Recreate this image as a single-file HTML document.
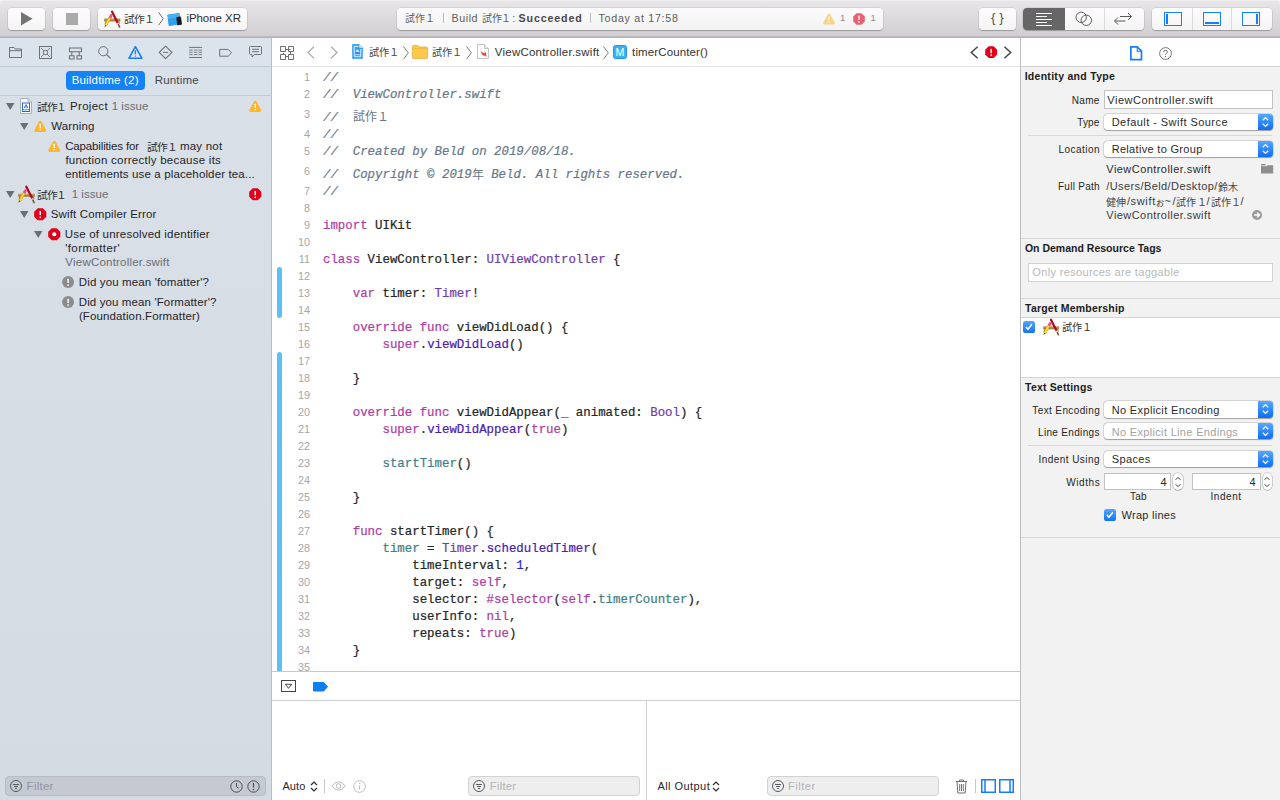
<!DOCTYPE html>
<html><head><meta charset="utf-8"><title>Xcode</title>
<style>
*{box-sizing:border-box;margin:0;padding:0}
html,body{width:1280px;height:800px;overflow:hidden;background:#fff;font-family:"Liberation Sans",sans-serif;font-size:12px;color:#262626}
.a{position:absolute}
svg{display:block;overflow:visible}
svg.cj{display:inline-block;vertical-align:-0.12em}
svg text.cjt{font-family:"Liberation Sans","Noto Sans CJK JP",sans-serif;font-size:1000px;font-style:normal;font-weight:400;stroke:none}
.t{position:absolute;white-space:nowrap;line-height:14px}
/* toolbar */
#tb{left:0;top:0;width:1280px;height:37px;background:linear-gradient(#e8e6e8,#d1cfd1);border-bottom:1px solid #bdbbbd;box-shadow:inset 0 1px 0 #f0eff0}
.btn{position:absolute;top:8px;height:22px;border-radius:4px;background:linear-gradient(#fdfdfd,#f4f4f4);box-shadow:0 0 0 .5px rgba(0,0,0,.12),0 1px 1px rgba(0,0,0,.22)}
/* navigator */
#nav{left:0;top:37px;width:272px;height:763px;background:linear-gradient(#d9e0e8,#d5dbe3);border-right:1px solid #b9bec6}
#navtabs{left:0;top:0;width:271px;height:30px;background:#dbe3ec;border-bottom:1px solid #c3cad2}
#navscope{left:0;top:30px;width:271px;height:29px;border-bottom:1px solid #c3cad2;background:#d9e1ea}
/* editor */
#ed{left:272px;top:37px;width:748px;height:763px;background:#fff}
#jump{left:0;top:0;width:748px;height:30px;border-bottom:1px solid #e3e3e3;background:#fff}
.code{position:absolute;left:51px;white-space:pre;font-family:"Liberation Mono",monospace;font-size:12.400px;line-height:17px;color:#262626;-webkit-text-stroke:.22px}
.ln{position:absolute;left:0;width:37.900px;text-align:right;font-family:"Liberation Sans",sans-serif;font-size:10.800px;line-height:17px;color:#a5a5aa}
.k{color:#ad3da4}.ty{color:#703daa}.fn{color:#4b21b0}.pr{color:#3e8087}.c{color:#68778a;font-style:italic}.nu{color:#272ad8}
/* inspector */
#insp{left:1020px;top:37px;width:260px;height:763px;background:#f2f2f2}

.hd{font-weight:700;font-size:10.500px;color:#1e1e1e}
.lb{left:0;width:79px;text-align:right;font-size:10.300px;color:#262626}
.fld{position:absolute;background:#fff;border:1px solid #c2c2c2}
.pop{position:absolute;left:84.300px;width:168.600px;border-radius:3.500px;background:#fff;box-shadow:0 0 0 .5px rgba(0,0,0,.18),0 .6px 1px rgba(0,0,0,.28)}
.stp{position:absolute;right:0;top:0;width:15px;height:100%;border-radius:0 3.500px 3.500px 0;background:linear-gradient(#54a8fd,#0f6df5)}
.stp2{position:absolute;width:9.700px;border-radius:4.850px;background:#fff;box-shadow:0 0 0 .5px rgba(0,0,0,.28),0 .6px 1px rgba(0,0,0,.18)}
.sep{position:absolute;left:8px;width:244px;height:1px;background:#d8d8d8}
.cb{position:absolute;width:11.700px;height:11.700px;border-radius:2.600px;background:linear-gradient(#53a7fd,#1272f6)}
</style></head><body>
<svg width="0" height="0" style="position:absolute;left:-10px;top:-10px"><defs>
<g id="warn"><path d="M6 0.6 Q6.7 0.6 7.1 1.3 L11.6 9.6 Q12.2 11.2 10.6 11.4 H1.4 Q-0.2 11.2 0.4 9.6 L4.9 1.3 Q5.3 0.6 6 0.6Z" fill="#fdb52c"/><rect x="5.35" y="3.6" width="1.3" height="4" rx=".4" fill="#fff"/><circle cx="6" cy="9.2" r=".8" fill="#fff"/></g>
<g id="err"><path d="M3.6 0.2H8.4L11.8 3.6V8.4L8.4 11.8H3.6L0.2 8.4V3.6Z" fill="#e0001a"/><rect x="5.3" y="2.6" width="1.4" height="4.4" rx=".5" fill="#fff"/><circle cx="6" cy="8.9" r=".85" fill="#fff"/></g>
<g id="errdot"><path d="M3.6 0.2H8.4L11.8 3.6V8.4L8.4 11.8H3.6L0.2 8.4V3.6Z" fill="#e0001a"/><circle cx="6" cy="6" r="2" fill="#fff"/></g>
<g id="note"><circle cx="6" cy="6" r="5.9" fill="#8c8c8c"/><rect x="5.3" y="2.6" width="1.4" height="4.4" rx=".5" fill="#fff"/><circle cx="6" cy="8.9" r=".85" fill="#fff"/></g>
<g id="xcicon"><rect x=".2" y="7.900" width="16.600" height="2.900" fill="#b07f47"/><rect x=".2" y="7.900" width="16.600" height=".8" fill="#d1a566"/><path d="M1.800 10.800L1.100 13.200M15.200 10.800L15.900 13.200" stroke="#8c6538" stroke-width="1"/><path d="M8.300 .8L14.300 12.600" stroke="#a50f1f" stroke-width="2.300" stroke-linecap="round"/><path d="M14.100 12.200L15 14.200" stroke="#dcdcdc" stroke-width="2.100"/><path d="M15 14.200L16 16.500" stroke="#7a4a2a" stroke-width="1.600" stroke-linecap="round"/><path d="M1.700 14.800L6.700 5.900" stroke="#c9a11b" stroke-width="3"/><path d="M1.900 14.600L6.800 5.800" stroke="#f7dc3a" stroke-width="1.900"/><path d="M6.700 6L7.400 4.700" stroke="#ee4d8d" stroke-width="2.900" stroke-linecap="round"/><path d="M.5 16.700L1 14.300L2.600 15.200Z" fill="#6b4a2c"/></g>
<!--x--><g id="simicon"><path d="M.8 2.100L12.100 .5L13.300 10.800L2.100 12.600Z" fill="#2f9ff0" stroke="#2f9ff0" stroke-width="1" stroke-linejoin="round"/><path d="M.8 2.100L12.100 .5L12.500 4L1.200 6Z" fill="#5fc0f8" opacity=".55"/><path d="M9.800 4.500L13.600 3.900L14.500 11.300L10.600 11.900Z" fill="#1b1b1d" stroke="#1b1b1d" stroke-width=".9" stroke-linejoin="round"/></g>
<g id="projicon"><path d="M.5 .5H8L11.500 4V15.500H.5Z" fill="#fff" stroke="#9aa0a8" stroke-width=".8"/><path d="M8 .5V4H11.500" fill="none" stroke="#9aa0a8" stroke-width=".8"/><rect x="2.500" y="5" width="7" height="8.500" fill="none" stroke="#2a6fc9" stroke-width="1"/><path d="M4.200 10L6 6.500L7.800 10M4.800 9H7.200" fill="none" stroke="#2a6fc9" stroke-width=".9"/><path d="M2.500 11.800H9.500" stroke="#2a6fc9" stroke-width=".8"/></g>
<g id="filt"><circle cx="6" cy="6" r="5.500" fill="none" stroke="#55595f"/><path d="M3 4.500H9M4 6.500H8M5 8.500H7" stroke="#55595f"/></g>
<g id="projicon2"><path d="M.3 .3H7.300L10.700 3.700V14.700H.3Z" fill="#1c90f3"/><path d="M.3 .3H7.300L10.700 3.700V8H.3Z" fill="#35aaf5" opacity=".7"/><path d="M7.300 .3V3.700H10.700Z" fill="#d9ecfb"/><path d="M2.200 2.500H6.500M2.200 2.500V12.800H8.800V5" fill="none" stroke="#fff" stroke-width=".9"/><path d="M3.800 8.200L5.500 5.800L7.200 8.200M4.500 7.300H6.500" fill="none" stroke="#fff" stroke-width=".9"/><path d="M2.200 10.800H8.800" stroke="#fff" stroke-width=".8"/></g>
<g id="swifticon"><path d="M.5 .5H7.500L11.500 4.500V14.500H.5Z" fill="#fff" stroke="#b5b5b5" stroke-width=".8"/><path d="M7.500 .5V4.500H11.500" fill="#eee" stroke="#b5b5b5" stroke-width=".8"/><path d="M3 8.500Q5 11 7 11.500Q8.500 11.800 9.500 13Q9.800 11.500 9 10.500Q9.500 8.500 7.500 7Q8 8.500 7.500 9.500Q5 8.500 3 6.500Q4 8.500 5.500 9.800Q4 9.300 3 8.500Z" fill="#e8432e"/></g>
</defs></svg>
<!-- ================= TOOLBAR ================= -->
<div id="tb" class="a">
<!-- run -->
<div class="btn" style="left:8px;width:37px"><svg class="a" style="left:13px;top:4px" width="12" height="13.500" viewBox="0 0 12 13.500"><path d="M0 0L11.500 6.750L0 13.500Z" fill="#737373"/></svg></div>
<!-- stop -->
<div class="btn" style="left:53px;width:37px"><div class="a" style="left:13px;top:5px;width:12px;height:12px;background:#ababab"></div></div>
<!-- scheme -->
<div class="btn" style="left:98px;width:149px">
<svg class="a" style="left:5.900px;top:2.600px" width="16.500" height="16.500" viewBox="0 0 17 17"><use href="#xcicon"/></svg>
<svg class="a" style="left:59.600px;top:4.200px" width="6" height="13.500" viewBox="0 0 6 13.500"><path d="M.6 .3L5.200 6.750L.6 13.200" fill="none" stroke="#6d6d6d" stroke-width="1"/></svg>
<svg class="a" style="left:69.200px;top:4.900px" width="15" height="13.200" viewBox="0 0 15 13.200"><use href="#simicon"/></svg>
</div>
<!-- status -->
<div class="btn" style="left:397px;width:486px;background:linear-gradient(#fbfbfb,#f3f3f3)">
<div class="a" style="left:46px;top:5.400px;width:1px;height:9.600px;background:#bdbdbd"></div>
<div class="a" style="left:193px;top:5.400px;width:1px;height:9.600px;background:#bdbdbd"></div>
<svg class="a" style="left:426px;top:4.5px" width="12" height="12" viewBox="0 0 12 12"><use href="#warn" style="opacity:.55"/></svg>
<svg class="a" style="left:456px;top:4.5px" width="12" height="12" viewBox="0 0 12 12"><use href="#err" style="opacity:.6"/></svg>
</div>
<!-- braces -->
<div class="btn" style="left:979px;width:37px"></div>
<!-- editor seg -->
<div class="btn" style="left:1023px;width:121px"></div>
<div class="a" style="left:1023px;top:8px;width:42px;height:22px;border-radius:4px 0 0 4px;background:#666"></div>
<svg class="a" style="left:1036px;top:13px" width="16" height="13" viewBox="0 0 16 13"><path d="M0 .5H16M0 3.5H11M0 6.5H16M0 9.5H11M0 12.500H16" stroke="#fff" stroke-width="1"/></svg>
<div class="a" style="left:1103.5px;top:8px;width:1px;height:22px;background:#dcdcdc"></div>
<svg class="a" style="left:1075px;top:11px" width="18" height="16" viewBox="0 0 18 16"><circle cx="6.2" cy="6.3" r="5.2" fill="none" stroke="#5b5b5b"/><circle cx="11.3" cy="9.3" r="5.2" fill="none" stroke="#5b5b5b"/></svg>
<svg class="a" style="left:1114px;top:12px" width="19" height="14" viewBox="0 0 19 14"><path d="M6 4.500H17.500M14 1L17.500 4.500L14 8M11.500 9H.5M4 5.500L.5 9L4 12.500" fill="none" stroke="#5b5b5b"/></svg>
<!-- panel seg -->
<div class="btn" style="left:1152px;width:120px"></div>
<div class="a" style="left:1192px;top:8px;width:1px;height:22px;background:#dcdcdc"></div>
<div class="a" style="left:1231px;top:8px;width:1px;height:22px;background:#dcdcdc"></div>
<svg class="a" style="left:1164px;top:12px" width="18" height="14" viewBox="0 0 18 14"><rect x=".5" y=".5" width="17" height="13" fill="none" stroke="#147efb"/><rect x="2" y="2" width="2" height="10" fill="#147efb"/></svg>
<svg class="a" style="left:1203px;top:12px" width="18" height="14" viewBox="0 0 18 14"><rect x=".5" y=".5" width="17" height="13" fill="none" stroke="#147efb"/><rect x="2" y="10" width="14" height="2" fill="#147efb"/></svg>
<svg class="a" style="left:1242px;top:12px" width="18" height="14" viewBox="0 0 18 14"><rect x=".5" y=".5" width="17" height="13" fill="none" stroke="#147efb"/><rect x="14" y="2" width="2" height="10" fill="#147efb"/></svg>
</div>
<div class="a" style="left:0;top:37px;width:1280px;height:1px;background:#b5b3b5;z-index:5"></div>
<div class="a" style="left:0;top:0;width:5px;height:5px;background:radial-gradient(circle at 5px 5px,transparent 4.600px,#f3f2f3 5.400px);z-index:6"></div>
<div class="a" style="left:1275px;top:0;width:5px;height:5px;background:radial-gradient(circle at 0 5px,transparent 4.600px,#f3f2f3 5.400px);z-index:6"></div>
<!-- ================= NAVIGATOR ================= -->
<div id="nav" class="a">
<div id="navtabs" class="a">
<svg class="a" style="left:8px;top:9px" width="15" height="13" viewBox="0 0 15 13"><path d="M1.500 11.500V1.500H6L7.200 3H13.500V11.500ZM1.500 4.700H13.500" fill="none" stroke="#6f7175" stroke-width="1"/></svg>
<svg class="a" style="left:38px;top:8px" width="15" height="15" viewBox="0 0 15 15"><rect x="1.500" y="1.500" width="12" height="12" fill="none" stroke="#6f7175"/><circle cx="7.500" cy="7.500" r="2.200" fill="none" stroke="#6f7175"/><path d="M3 3L5.900 5.900M12 3L9.100 5.900M3 12L5.900 9.100M12 12L9.100 9.100" stroke="#6f7175" stroke-width=".9"/></svg>
<svg class="a" style="left:68px;top:9.500px" width="15" height="13" viewBox="0 0 15 13"><path d="M1.500 1H13.500V4.700H1.500ZM1.500 8.800H6V12H1.500ZM9 8.800H13.500V12H9ZM3.800 4.700V8.800M11.200 4.700V8.800" fill="none" stroke="#6f7175" stroke-width="1.100"/></svg>
<svg class="a" style="left:97px;top:8px" width="15" height="15" viewBox="0 0 15 15"><circle cx="6.300" cy="6.200" r="4.600" fill="none" stroke="#6f7175"/><path d="M9.600 9.600L13.600 13.400" stroke="#6f7175" stroke-width="1.300"/></svg>
<svg class="a" style="left:127px;top:7px" width="17" height="16" viewBox="0 0 17 16"><path d="M8.400 2.600L14.800 14.200H2Z" fill="none" stroke="#147efb" stroke-width="1.600" stroke-linejoin="round"/><path d="M8.400 6.300V10.400" stroke="#147efb" stroke-width="1.300"/><circle cx="8.400" cy="12.100" r=".7" fill="#147efb"/></svg>
<svg class="a" style="left:158px;top:8px" width="15" height="15" viewBox="0 0 15 15"><path d="M7.600 1.100L14 7.400L7.600 13.700L1.200 7.400Z" fill="none" stroke="#6f7175" stroke-linejoin="round" stroke-width="1.100"/><path d="M5 7.400H10.200" stroke="#6f7175"/></svg>
<svg class="a" style="left:188px;top:9px" width="15" height="13" viewBox="0 0 15 13"><path d="M1.200 1.400H14M1.200 11.500H14" stroke="#6f7175" stroke-width="1"/><path d="M1.200 4.100H4.700M5.800 4.100H9.500M10.500 4.100H14M1.200 6.300H4.700M5.800 6.300H9.500M10.500 6.300H14M1.200 8.600H4.700M5.800 8.600H9.500M10.500 8.600H14" stroke="#6f7175" stroke-width=".9"/></svg>
<svg class="a" style="left:218px;top:10.500px" width="15" height="9" viewBox="0 0 15 9"><path d="M1.700 1.400H10.200L13.600 4.800L10.200 8.200H1.700Z" fill="none" stroke="#6f7175" stroke-linejoin="round"/></svg>
<svg class="a" style="left:248px;top:8px" width="15" height="14" viewBox="0 0 15 14"><path d="M2.500 1.500H12.500Q13.500 1.500 13.500 2.500V8.500Q13.500 9.500 12.500 9.500H6.500L4 12V9.500H2.500Q1.500 9.500 1.500 8.500V2.500Q1.500 1.500 2.500 1.500Z" fill="none" stroke="#6f7175" stroke-linejoin="round"/><path d="M4 4.300H11M4 6.700H11" stroke="#6f7175"/></svg>
</div>
<div id="navscope" class="a">
<div class="a" style="left:66px;top:4px;width:79px;height:19px;border-radius:4px;background:#1583f7"></div>
</div>
<!-- tree -->
<svg class="a" style="left:6.2px;top:66.3px" width="9" height="7" viewBox="0 0 9 7"><path d="M0 0H8.500L4.250 7Z" fill="#6b6f75"/></svg>
<svg class="a" style="left:20px;top:61px" width="12" height="16" viewBox="0 0 12 16"><use href="#projicon"/></svg>
<span class="t" style="left:70.75px;top:62px;font-size:11.5px;color:#1f2328;letter-spacing:0.287px;margin-left:-0.70px">Project</span>
<span class="t" style="left:112.5px;top:62px;font-size:11.5px;color:#6a6e74;letter-spacing:0.053px;margin-left:-0.89px">1 issue</span>
<svg class="a" style="left:248.75px;top:62.75px" width="12.5" height="12.5" viewBox="0 0 12 12"><use href="#warn"/></svg>
<svg class="a" style="left:20.4px;top:86.3px" width="9" height="7" viewBox="0 0 9 7"><path d="M0 0H8.500L4.250 7Z" fill="#6b6f75"/></svg>
<svg class="a" style="left:33.75px;top:82.75px" width="12.5" height="12.5" viewBox="0 0 12 12"><use href="#warn"/></svg>
<span class="t" style="left:51.25px;top:82px;font-size:11.5px;color:#1f2328;letter-spacing:0.109px;margin-left:0.04px">Warning</span>
<svg class="a" style="left:47.5px;top:102.75px" width="12.5" height="12.5" viewBox="0 0 12 12"><use href="#warn"/></svg>
<span class="t" style="left:65.5px;top:102px;font-size:11.5px;color:#1f2328;letter-spacing:-0.149px;margin-left:-0.31px">Capabilities for</span>
<span class="t" style="left:180.5px;top:102px;font-size:11.5px;color:#1f2328;letter-spacing:0.213px;margin-left:-0.62px">may not</span>
<span class="t" style="left:65.5px;top:116px;font-size:11.5px;color:#1f2328;letter-spacing:0.246px;margin-left:-0.12px">function correctly because its</span>
<span class="t" style="left:65.5px;top:130px;font-size:11.5px;color:#1f2328;letter-spacing:0.134px;margin-left:-0.37px">entitlements use a placeholder tea...</span>
<svg class="a" style="left:6.2px;top:154.3px" width="9" height="7" viewBox="0 0 9 7"><path d="M0 0H8.500L4.250 7Z" fill="#6b6f75"/></svg>
<svg class="a" style="left:17.500px;top:149px" width="17" height="17" viewBox="0 0 17 17"><use href="#xcicon"/></svg>
<span class="t" style="left:72.5px;top:150px;font-size:11.5px;color:#6a6e74;letter-spacing:0.053px;margin-left:-0.88px">1 issue</span>
<svg class="a" style="left:248.75px;top:150.75px" width="12.5" height="12.5" viewBox="0 0 12 12"><use href="#err"/></svg>
<svg class="a" style="left:20.4px;top:174.3px" width="9" height="7" viewBox="0 0 9 7"><path d="M0 0H8.500L4.250 7Z" fill="#6b6f75"/></svg>
<svg class="a" style="left:33.75px;top:170.75px" width="12.5" height="12.5" viewBox="0 0 12 12"><use href="#err"/></svg>
<span class="t" style="left:51.25px;top:170px;font-size:11.5px;color:#1f2328;letter-spacing:0.151px;margin-left:-0.58px">Swift Compiler Error</span>
<svg class="a" style="left:34.2px;top:194.3px" width="9" height="7" viewBox="0 0 9 7"><path d="M0 0H8.500L4.250 7Z" fill="#6b6f75"/></svg>
<svg class="a" style="left:47.5px;top:190.75px" width="12.5" height="12.5" viewBox="0 0 12 12"><use href="#errdot"/></svg>
<span class="t" style="left:65.5px;top:190px;font-size:11.5px;color:#1f2328;letter-spacing:0.208px;margin-left:-0.79px">Use of unresolved identifier</span>
<span class="t" style="left:65.5px;top:204px;font-size:11.5px;color:#1f2328;letter-spacing:0.404px;margin-left:-0.33px">'formatter'</span>
<span class="t" style="left:65.5px;top:218px;font-size:11.5px;color:#6a6e74;letter-spacing:0.209px;margin-left:-0.15px">ViewController.swift</span>
<svg class="a" style="left:61.75px;top:239px" width="12.2" height="12.2" viewBox="0 0 12 12"><use href="#note"/></svg>
<span class="t" style="left:79.5px;top:238px;font-size:11.5px;color:#1f2328;letter-spacing:0.133px;margin-left:-0.71px">Did you mean 'fomatter'?</span>
<svg class="a" style="left:61.75px;top:259px" width="12.2" height="12.2" viewBox="0 0 12 12"><use href="#note"/></svg>
<span class="t" style="left:79.5px;top:258px;font-size:11.5px;color:#1f2328;letter-spacing:0.117px;margin-left:-0.75px">Did you mean 'Formatter'?</span>
<span class="t" style="left:79.5px;top:272px;font-size:11.5px;color:#1f2328;letter-spacing:0.125px;margin-left:-0.60px">(Foundation.Formatter)</span>

<!-- filter -->
<div class="a" style="left:5px;top:739px;width:261px;height:20px;border-radius:4px;background:#c5cad2;border:1px solid #b7bcc4"></div>
<svg class="a" style="left:10px;top:743px" width="12" height="12" viewBox="0 0 12 12"><use href="#filt"/></svg>
<svg class="a" style="left:230px;top:743px" width="13" height="13" viewBox="0 0 13 13"><circle cx="6.500" cy="6.500" r="5.700" fill="none" stroke="#4a4d52"/><path d="M6.500 3V6.800L8.800 8.200" fill="none" stroke="#4a4d52"/></svg>
<svg class="a" style="left:247px;top:743px" width="13" height="13" viewBox="0 0 13 13"><circle cx="6.500" cy="6.500" r="5.700" fill="none" stroke="#4a4d52"/><path d="M6.500 3V7.500" stroke="#4a4d52" stroke-width="1.200"/><circle cx="6.500" cy="9.500" r=".8" fill="#4a4d52"/></svg>
</div>
<!-- ================= EDITOR ================= -->
<div id="ed" class="a">
<div id="codewrap" class="a" style="left:0;top:30px;width:748px;height:604px;overflow:hidden">
<div class="a" style="left:0;top:-30px;width:748px;height:700px">
<div class="ln" style="top:32px">1</div><div class="code" style="top:33px"><span class="c">//</span></div>
<div class="ln" style="top:49px">2</div><div class="code" style="top:50px"><span class="c">//  ViewController.swift</span></div>
<div class="ln" style="top:69px">3</div><div class="code" style="top:73px"><span class="c">//</span></div>
<div class="ln" style="top:89px">4</div><div class="code" style="top:90px"><span class="c">//</span></div>
<div class="ln" style="top:106px">5</div><div class="code" style="top:107px"><span class="c">//  Created by Beld on 2019/08/18.</span></div>
<div class="ln" style="top:126px">6</div><div class="code" style="top:130px"><span class="c">//  Copyright © 2019</span><svg class="cj" width="12.00" height="12.00" viewBox="0 0 1000 1000" style="fill:#68778a;vertical-align:-0.165em"><text class="cjt" x="0" y="880">年</text></svg><span class="c"> Beld. All rights reserved.</span></div>
<div class="ln" style="top:146px">7</div><div class="code" style="top:147px"><span class="c">//</span></div>
<div class="ln" style="top:163px">8</div>
<div class="ln" style="top:180px">9</div><div class="code" style="top:181px"><span class="k">import</span> UIKit</div>
<div class="ln" style="top:197px">10</div>
<div class="ln" style="top:214px">11</div><div class="code" style="top:215px"><span class="k">class</span> ViewController: <span class="ty">UIViewController</span> {</div>
<div class="ln" style="top:231px">12</div>
<div class="ln" style="top:248px">13</div><div class="code" style="top:249px">    <span class="k">var</span> timer: <span class="ty">Timer</span>!</div>
<div class="ln" style="top:265px">14</div>
<div class="ln" style="top:282px">15</div><div class="code" style="top:283px">    <span class="k">override</span> <span class="k">func</span> viewDidLoad() {</div>
<div class="ln" style="top:299px">16</div><div class="code" style="top:300px">        <span class="k">super</span>.<span class="fn">viewDidLoad</span>()</div>
<div class="ln" style="top:316px">17</div>
<div class="ln" style="top:333px">18</div><div class="code" style="top:334px">    }</div>
<div class="ln" style="top:350px">19</div>
<div class="ln" style="top:367px">20</div><div class="code" style="top:368px">    <span class="k">override</span> <span class="k">func</span> viewDidAppear(<span class="k">_</span> animated: <span class="ty">Bool</span>) {</div>
<div class="ln" style="top:384px">21</div><div class="code" style="top:385px">        <span class="k">super</span>.<span class="fn">viewDidAppear</span>(<span class="k">true</span>)</div>
<div class="ln" style="top:401px">22</div>
<div class="ln" style="top:418px">23</div><div class="code" style="top:419px">        <span class="pr">startTimer</span>()</div>
<div class="ln" style="top:435px">24</div>
<div class="ln" style="top:452px">25</div><div class="code" style="top:453px">    }</div>
<div class="ln" style="top:469px">26</div>
<div class="ln" style="top:486px">27</div><div class="code" style="top:487px">    <span class="k">func</span> startTimer() {</div>
<div class="ln" style="top:503px">28</div><div class="code" style="top:504px">        <span class="pr">timer</span> = <span class="ty">Timer</span>.<span class="fn">scheduledTimer</span>(</div>
<div class="ln" style="top:520px">29</div><div class="code" style="top:521px">            timeInterval: <span class="nu">1</span>,</div>
<div class="ln" style="top:537px">30</div><div class="code" style="top:538px">            target: <span class="k">self</span>,</div>
<div class="ln" style="top:554px">31</div><div class="code" style="top:555px">            selector: <span class="k">#selector</span>(<span class="k">self</span>.<span class="pr">timerCounter</span>),</div>
<div class="ln" style="top:571px">32</div><div class="code" style="top:572px">            userInfo: <span class="k">nil</span>,</div>
<div class="ln" style="top:588px">33</div><div class="code" style="top:589px">            repeats: <span class="k">true</span>)</div>
<div class="ln" style="top:605px">34</div><div class="code" style="top:606px">    }</div>
<div class="ln" style="top:622px">35</div>
<div class="a" style="left:5px;top:230px;width:5px;height:51px;border-radius:2.500px;background:#5bc0f5"></div>
<div class="a" style="left:5px;top:315px;width:5px;height:340px;border-radius:2.500px;background:#5bc0f5"></div>
</div></div>
<div id="jump" class="a">
<svg class="a" style="left:8px;top:9px" width="14" height="14" viewBox="0 0 14 14"><path d="M.5 .5H5.500V5.500H.5ZM8.500 .5H13.500V5.500H8.500ZM.5 8.500H5.500V13.500H.5ZM8.500 8.500H13.500V13.500H8.500ZM5.500 3.500H10.500M10.500 5.500V8.500M5.500 10.500H8.500M3.500 8.500V7" fill="none" stroke="#6e6e6e"/></svg>
<svg class="a" style="left:35px;top:8.8px" width="8" height="13" viewBox="0 0 8 13"><path d="M7 .6L1 6.500L7 12.400" fill="none" stroke="#a6a6a6" stroke-width="1.200"/></svg>
<svg class="a" style="left:57.5px;top:8.8px" width="8" height="13" viewBox="0 0 8 13"><path d="M1 .6L7 6.500L1 12.400" fill="none" stroke="#a6a6a6" stroke-width="1.200"/></svg>
<svg class="a" style="left:79.6px;top:7.4px" width="11" height="15" viewBox="0 0 11 15"><use href="#projicon2"/></svg>
<svg class="a" style="left:131px;top:8.6px" width="6" height="14" viewBox="0 0 6 14"><path d="M.5 .5L5.300 6.800L.5 13.200" fill="none" stroke="#7a7a7a" stroke-width="1"/></svg>
<svg class="a" style="left:140.2px;top:8px" width="16" height="14" viewBox="0 0 16 14"><path d="M.4 1.500Q.4 .4 1.500 .4H5.800L7.300 2H14.500Q15.600 2 15.600 3V12.500Q15.600 13.600 14.500 13.600H1.500Q.4 13.600 .4 12.500Z" fill="#fbc94c" stroke="#e0a62b" stroke-width=".7"/><path d="M.8 3.600H15.200" stroke="#f3b937" stroke-width=".7"/></svg>
<svg class="a" style="left:194px;top:8.6px" width="6" height="14" viewBox="0 0 6 14"><path d="M.5 .5L5.300 6.800L.5 13.200" fill="none" stroke="#7a7a7a" stroke-width="1"/></svg>
<svg class="a" style="left:204.7px;top:7.4px" width="12" height="15" viewBox="0 0 12 15"><use href="#swifticon"/></svg>
<span class="t" style="left:222.9px;top:7.7px;font-size:11.500px;color:#333;letter-spacing:0.228px;margin-left:-0.11px">ViewController.swift</span>
<svg class="a" style="left:330.8px;top:8.6px" width="6" height="14" viewBox="0 0 6 14"><path d="M.5 .5L5.300 6.800L.5 13.200" fill="none" stroke="#7a7a7a" stroke-width="1"/></svg>
<div class="a" style="left:341px;top:8px;width:14px;height:14px;border-radius:2.500px;background:#3ab2f2;border:.6px solid #2394d8"></div>
<span class="t" style="left:343.5px;top:8px;font-size:10.500px;color:#fff">M</span>
<span class="t" style="left:360.3px;top:7.7px;font-size:11.500px;color:#333;letter-spacing:0.125px;margin-left:-0.22px">timerCounter()</span>
<svg class="a" style="left:698.4px;top:8.8px" width="9" height="13" viewBox="0 0 9 13"><path d="M7.600 .7L1.300 6.500L7.600 12.300" fill="none" stroke="#454545" stroke-width="1.500"/></svg>
<svg class="a" style="left:713px;top:9px" width="12.300" height="12.300" viewBox="0 0 12 12"><use href="#err"/></svg>
<svg class="a" style="left:731.3px;top:8.8px" width="9" height="13" viewBox="0 0 9 13"><path d="M1.400 .7L7.700 6.500L1.400 12.300" fill="none" stroke="#454545" stroke-width="1.500"/></svg>
</div>
<!-- debug area -->
<div class="a" style="left:0;top:634px;width:748px;height:129px;background:#fff;border-top:1px solid #c9c9c9"></div>
<div class="a" style="left:0;top:663px;width:748px;height:1px;background:#cfcfcf"></div>
<div class="a" style="left:374px;top:664px;width:1px;height:99px;background:#d2d2d2"></div>
<svg class="a" style="left:9px;top:643px" width="15" height="12" viewBox="0 0 15 12"><rect x=".5" y=".5" width="14" height="11" fill="none" stroke="#444"/><path d="M4.300 4.300H10.700L7.500 8.300Z" fill="none" stroke="#444" stroke-linejoin="round"/></svg>
<svg class="a" style="left:41px;top:644.800px" width="16" height="9.400" viewBox="0 0 16 9.400"><path d="M0 .8Q0 0 .8 0H10.800L15 4.700L10.800 9.400H.8Q0 9.400 0 8.600Z" fill="#0d7df2"/></svg>
<svg class="a" style="left:38px;top:744px" width="8" height="11" viewBox="0 0 8 11"><path d="M1 4L4 1L7 4M1 7L4 10L7 7" fill="none" stroke="#2d2d2d" stroke-width="1.200"/></svg>
<div class="a" style="left:52px;top:742px;width:1px;height:14px;background:#c8c8c8"></div>
<svg class="a" style="left:59px;top:744px" width="15" height="10" viewBox="0 0 15 10"><path d="M.7 5Q7.500 -3.500 14.300 5Q7.500 13.500 .7 5Z" fill="none" stroke="#bdbdbd"/><circle cx="7.500" cy="5" r="2.300" fill="none" stroke="#bdbdbd"/></svg>
<svg class="a" style="left:81px;top:743px" width="13" height="13" viewBox="0 0 13 13"><circle cx="6.500" cy="6.500" r="5.800" fill="none" stroke="#bdbdbd"/><path d="M6.500 5.500V9.500" stroke="#bdbdbd" stroke-width="1.200"/><circle cx="6.500" cy="3.600" r=".75" fill="#bdbdbd"/></svg>
<div class="a" style="left:196px;top:739px;width:172px;height:20px;border-radius:4px;background:#eee;border:1px solid #d2d2d2"></div>
<svg class="a" style="left:201px;top:743px" width="12" height="12" viewBox="0 0 12 12"><use href="#filt"/></svg>
<svg class="a" style="left:440px;top:744px" width="8" height="11" viewBox="0 0 8 11"><path d="M1 4L4 1L7 4M1 7L4 10L7 7" fill="none" stroke="#2d2d2d" stroke-width="1.200"/></svg>
<div class="a" style="left:495px;top:739px;width:172px;height:20px;border-radius:4px;background:#eee;border:1px solid #d2d2d2"></div>
<svg class="a" style="left:500px;top:743px" width="12" height="12" viewBox="0 0 12 12"><use href="#filt"/></svg>
<svg class="a" style="left:683px;top:742px" width="13" height="15" viewBox="0 0 13 15"><path d="M1 2.500H12M4.500 2.500V1H8.500V2.500M2 2.500L2.800 14H10.200L11 2.500M4.700 5V12M6.500 5V12M8.300 5V12" fill="none" stroke="#707070"/></svg>
<div class="a" style="left:703px;top:742px;width:1px;height:14px;background:#c8c8c8"></div>
<svg class="a" style="left:709px;top:742px" width="15" height="14" viewBox="0 0 15 14"><rect x=".75" y=".75" width="13.500" height="12.500" fill="none" stroke="#147efb" stroke-width="1.500"/><path d="M4 1V13" stroke="#147efb" stroke-width="1.500"/></svg>
<svg class="a" style="left:727px;top:742px" width="15" height="14" viewBox="0 0 15 14"><rect x=".75" y=".75" width="13.500" height="12.500" fill="none" stroke="#147efb" stroke-width="1.500"/><path d="M11 1V13" stroke="#147efb" stroke-width="1.500"/></svg>
</div>
<!-- ================= INSPECTOR ================= -->
<div id="insp" class="a">
<div class="a" style="left:0;top:0;width:1px;height:763px;background:#bdbdbd"></div>
<div class="a" style="left:1px;top:0;width:259px;height:29.500px;background:#fff;border-bottom:1px solid #d2d2d2"></div>
<svg class="a" style="left:109.75px;top:9.3px" width="12.400" height="14.500" viewBox="0 0 12.400 14.500"><path d="M.9 .9H7.200L11.500 5.200V13.600H.9Z" fill="none" stroke="#147efb" stroke-width="1.700"/><path d="M7.200 1V5.200H11.400" fill="none" stroke="#147efb" stroke-width="1.100"/></svg>
<svg class="a" style="left:139.1px;top:10.3px" width="13" height="13" viewBox="0 0 13 13"><circle cx="6.500" cy="6.500" r="5.900" fill="none" stroke="#6a6a6a" stroke-width=".9"/><path d="M4.600 5.100Q4.600 3.300 6.500 3.300Q8.400 3.300 8.400 4.900Q8.400 5.800 7.400 6.400Q6.500 6.900 6.500 7.900" fill="none" stroke="#6a6a6a" stroke-width="1"/><circle cx="6.500" cy="9.600" r=".7" fill="#6a6a6a"/></svg>
<div class="fld" style="left:84.3px;top:53.4px;width:168.6px;height:18.3px"></div>
<div class="pop" style="top:76.7px;height:16.3px"><div class="stp"><svg class="a" style="left:4px;top:2.15px" width="7" height="12" viewBox="0 0 7 12"><path d="M.8 4.300L3.500 1.600L6.200 4.300M.8 7.700L3.500 10.400L6.200 7.700" fill="none" stroke="#fff" stroke-width="1.250"/></svg></div></div>
<div class="sep" style="top:98.3px"></div>
<div class="pop" style="top:103.75px;height:16.05px"><div class="stp"><svg class="a" style="left:4px;top:2.025px" width="7" height="12" viewBox="0 0 7 12"><path d="M.8 4.300L3.500 1.600L6.200 4.300M.8 7.700L3.500 10.400L6.200 7.700" fill="none" stroke="#fff" stroke-width="1.250"/></svg></div></div>
<svg class="a" style="left:240.7px;top:127.1px" width="12.200" height="9.600" viewBox="0 0 13 10"><path d="M0 0H5V1.500H0Z M0 2.300H6L7 1.200H13V10H0Z" fill="#8e8e8e"/></svg>
<svg class="a" style="left:232px;top:173.1px" width="10" height="10" viewBox="0 0 10 10"><circle cx="5" cy="5" r="5" fill="#9c9c9c"/><path d="M2.200 5H7.400M5.200 2.600L7.600 5L5.200 7.400" fill="none" stroke="#fff" stroke-width="1.300"/></svg>
<div class="sep" style="top:200.8px;left:1px;width:259px"></div>
<div class="fld" style="left:8.1px;top:225.5px;width:244.8px;height:19.9px;border-color:#d2d2d2"></div>
<div class="sep" style="top:261px;left:1px;width:259px"></div>
<div class="a" style="left:1px;top:280.2px;width:259px;height:60.6px;background:#fff;border-top:1px solid #d4d4d4;border-bottom:1px solid #d4d4d4"></div>
<div class="cb" style="left:3px;top:284.4px"><svg width="11.700" height="11.700" viewBox="0 0 11 11"><path d="M2.700 5.700L4.700 7.800L8.300 3.100" fill="none" stroke="#fff" stroke-width="1.500"/></svg></div>
<svg class="a" style="left:22.75px;top:281.9px" width="16.300" height="16.300" viewBox="0 0 17 17"><use href="#xcicon"/></svg>
<div class="pop" style="top:364.4px;height:16.2px"><div class="stp"><svg class="a" style="left:4px;top:2.1px" width="7" height="12" viewBox="0 0 7 12"><path d="M.8 4.300L3.500 1.600L6.200 4.300M.8 7.700L3.500 10.400L6.200 7.700" fill="none" stroke="#fff" stroke-width="1.250"/></svg></div></div>
<div class="pop" style="top:386.3px;height:16.1px"><div class="stp"><svg class="a" style="left:4px;top:2.05px" width="7" height="12" viewBox="0 0 7 12"><path d="M.8 4.300L3.500 1.600L6.200 4.300M.8 7.700L3.500 10.400L6.200 7.700" fill="none" stroke="#fff" stroke-width="1.250"/></svg></div></div>
<div class="sep" style="top:407.6px"></div>
<div class="pop" style="top:413.7px;height:16.1px"><div class="stp"><svg class="a" style="left:4px;top:2.05px" width="7" height="12" viewBox="0 0 7 12"><path d="M.8 4.300L3.500 1.600L6.200 4.300M.8 7.700L3.500 10.400L6.200 7.700" fill="none" stroke="#fff" stroke-width="1.250"/></svg></div></div>
<div class="fld" style="left:84.3px;top:435.5px;width:67px;height:17.8px"></div>
<div class="stp2" style="left:153.4px;top:435.5px;height:17.8px"><svg class="a" style="left:1.800px;top:3px" width="6" height="12" viewBox="0 0 6 12"><path d="M.6 3.800L3 1.400L5.400 3.800M.6 8.200L3 10.600L5.400 8.200" fill="none" stroke="#3c3c3c" stroke-width="1"/></svg></div>
<div class="fld" style="left:172.25px;top:435.5px;width:68.45px;height:17.8px"></div>
<div class="stp2" style="left:242.7px;top:435.5px;height:17.8px"><svg class="a" style="left:1.800px;top:3px" width="6" height="12" viewBox="0 0 6 12"><path d="M.6 3.800L3 1.400L5.400 3.800M.6 8.200L3 10.600L5.400 8.200" fill="none" stroke="#3c3c3c" stroke-width="1"/></svg></div>
<div class="cb" style="left:84.3px;top:472px"><svg width="11.700" height="11.700" viewBox="0 0 11 11"><path d="M2.700 5.700L4.700 7.800L8.300 3.100" fill="none" stroke="#fff" stroke-width="1.500"/></svg></div>
<div class="sep" style="top:500.1px;left:1px;width:259px"></div>
</div>
<!-- ================= TEXT OVERLAY (page coords) ================= -->
<div class="a" style="left:0;top:0;width:0;height:0">
<svg class="a cjo" style="left:123.87px;top:13.30px;fill:#3a3a3a" width="19.80" height="10.80" viewBox="0 0 1833 1000"><text class="cjt" x="0" y="880">試</text><text class="cjt" x="917" y="880">作</text></svg><svg class="a cjo" style="left:143.68px;top:13.30px;fill:#3a3a3a" width="10.80" height="10.80" viewBox="0 0 1000 1000"><text class="cjt" x="0" y="880">１</text></svg>
<svg class="a cjo" style="left:405.35px;top:13.20px;fill:#606060" width="20.00" height="10.00" viewBox="0 0 2000 1000"><text class="cjt" x="0" y="880">試</text><text class="cjt" x="1000" y="880">作</text></svg><svg class="a cjo" style="left:425.45px;top:13.20px;fill:#606060" width="10.00" height="10.00" viewBox="0 0 1000 1000"><text class="cjt" x="0" y="880">１</text></svg>
<svg class="a cjo" style="left:481.60px;top:13.20px;fill:#606060" width="20.00" height="10.00" viewBox="0 0 2000 1000"><text class="cjt" x="0" y="880">試</text><text class="cjt" x="1000" y="880">作</text></svg><svg class="a cjo" style="left:500.85px;top:13.20px;fill:#606060" width="10.00" height="10.00" viewBox="0 0 1000 1000"><text class="cjt" x="0" y="880">１</text></svg>
<svg class="a cjo" style="left:36.87px;top:100.90px;fill:#2c3036" width="20.00" height="10.80" viewBox="0 0 1852 1000"><text class="cjt" x="0" y="880">試</text><text class="cjt" x="926" y="880">作</text></svg><svg class="a cjo" style="left:56.28px;top:100.90px;fill:#2c3036" width="10.80" height="10.80" viewBox="0 0 1000 1000"><text class="cjt" x="0" y="880">１</text></svg>
<svg class="a cjo" style="left:147.17px;top:140.90px;fill:#2c3036" width="20.00" height="10.80" viewBox="0 0 1852 1000"><text class="cjt" x="0" y="880">試</text><text class="cjt" x="926" y="880">作</text></svg><svg class="a cjo" style="left:166.58px;top:140.90px;fill:#2c3036" width="10.80" height="10.80" viewBox="0 0 1000 1000"><text class="cjt" x="0" y="880">１</text></svg>
<svg class="a cjo" style="left:36.87px;top:188.90px;fill:#2c3036" width="20.00" height="10.80" viewBox="0 0 1852 1000"><text class="cjt" x="0" y="880">試</text><text class="cjt" x="926" y="880">作</text></svg><svg class="a cjo" style="left:56.28px;top:188.90px;fill:#2c3036" width="10.80" height="10.80" viewBox="0 0 1000 1000"><text class="cjt" x="0" y="880">１</text></svg>
<svg class="a cjo" style="left:369.09px;top:47.22px;fill:#454545" width="20.20" height="10.20" viewBox="0 0 1980 1000"><text class="cjt" x="0" y="880">試</text><text class="cjt" x="990" y="880">作</text></svg><svg class="a cjo" style="left:389.28px;top:47.22px;fill:#454545" width="10.20" height="10.20" viewBox="0 0 1000 1000"><text class="cjt" x="0" y="880">１</text></svg>
<svg class="a cjo" style="left:432.29px;top:47.22px;fill:#454545" width="20.20" height="10.20" viewBox="0 0 1980 1000"><text class="cjt" x="0" y="880">試</text><text class="cjt" x="990" y="880">作</text></svg><svg class="a cjo" style="left:452.28px;top:47.22px;fill:#454545" width="10.20" height="10.20" viewBox="0 0 1000 1000"><text class="cjt" x="0" y="880">１</text></svg>
<svg class="a cjo" style="left:1218.30px;top:182.00px;fill:#484848" width="20.00" height="10.00" viewBox="0 0 2000 1000"><text class="cjt" x="0" y="880">鈴</text><text class="cjt" x="1000" y="880">木</text></svg>
<svg class="a cjo" style="left:1105.90px;top:196.80px;fill:#484848" width="20.00" height="10.00" viewBox="0 0 2000 1000"><text class="cjt" x="0" y="880">健</text><text class="cjt" x="1000" y="880">伸</text></svg>
<svg class="a cjo" style="left:1155.20px;top:196.80px;fill:#484848" width="10.00" height="10.00" viewBox="0 0 1000 1000"><text class="cjt" x="0" y="880">ぉ</text></svg>
<svg class="a cjo" style="left:1176.40px;top:196.80px;fill:#484848" width="20.00" height="10.00" viewBox="0 0 2000 1000"><text class="cjt" x="0" y="880">試</text><text class="cjt" x="1000" y="880">作</text></svg><svg class="a cjo" style="left:1196.95px;top:196.80px;fill:#484848" width="10.00" height="10.00" viewBox="0 0 1000 1000"><text class="cjt" x="0" y="880">１</text></svg>
<svg class="a cjo" style="left:1210.90px;top:196.80px;fill:#484848" width="20.00" height="10.00" viewBox="0 0 2000 1000"><text class="cjt" x="0" y="880">試</text><text class="cjt" x="1000" y="880">作</text></svg><svg class="a cjo" style="left:1230.95px;top:196.80px;fill:#484848" width="10.00" height="10.00" viewBox="0 0 1000 1000"><text class="cjt" x="0" y="880">１</text></svg>
<svg class="a cjo" style="left:1062.29px;top:322.22px;fill:#333" width="20.20" height="10.20" viewBox="0 0 1980 1000"><text class="cjt" x="0" y="880">試</text><text class="cjt" x="990" y="880">作</text></svg><svg class="a cjo" style="left:1082.18px;top:322.22px;fill:#333" width="10.20" height="10.20" viewBox="0 0 1000 1000"><text class="cjt" x="0" y="880">１</text></svg>
<svg class="a cjo" style="left:353.02px;top:110.04px;fill:#68778a" width="24.00" height="12.00" viewBox="0 0 2000 1000"><text class="cjt" x="0" y="880">試</text><text class="cjt" x="1000" y="880">作</text></svg><svg class="a cjo" style="left:376.68px;top:110.04px;fill:#68778a" width="12.00" height="12.00" viewBox="0 0 1000 1000"><text class="cjt" x="0" y="880">１</text></svg>
<span class="t" style="left:187px;top:11.00px;font-size:11.5px;color:#2e2e2e;;letter-spacing:-0.044px;margin-left:-0.64px">iPhone XR</span>
<span class="t" style="left:452.25px;top:11.00px;font-size:10.7px;color:#5c5c5c;;letter-spacing:0.560px;margin-left:-0.69px">Build</span>
<span class="t" style="left:512.2px;top:11.00px;font-size:10.7px;color:#5c5c5c;">:</span>
<span class="t" style="left:518.75px;top:11.00px;font-size:10.7px;color:#484848;font-weight:700;letter-spacing:0.868px;margin-left:-0.27px">Succeeded</span>
<span class="t" style="left:599px;top:11.00px;font-size:10.7px;color:#5c5c5c;;letter-spacing:0.704px;margin-left:-0.43px">Today at 17:58</span>
<span class="t" style="left:840px;top:11.00px;font-size:9.5px;color:#8c8c8c;">1</span>
<span class="t" style="left:870.4px;top:11.00px;font-size:9.5px;color:#8c8c8c;">1</span>
<span class="t" style="left:991px;top:11.00px;font-size:13.5px;color:#555;">{</span>
<span class="t" style="left:999.3px;top:11.00px;font-size:13.5px;color:#555;">}</span>
<span class="t" style="left:1025.1px;top:69.00px;font-size:10.5px;color:#1c1c1c;font-weight:700;letter-spacing:0.288px;margin-left:-0.48px">Identity and Type</span>
<span class="t" style="left:1072.4px;top:94.00px;font-size:10px;color:#262626;;letter-spacing:0.323px;margin-left:-0.69px">Name</span>
<span class="t" style="left:1107.3px;top:93.00px;font-size:11px;color:#2b2b2b;;letter-spacing:0.508px;margin-left:0.02px">ViewController.swift</span>
<span class="t" style="left:1077.3px;top:116.00px;font-size:10px;color:#262626;;letter-spacing:0.160px;margin-left:-0.10px">Type</span>
<span class="t" style="left:1112.4px;top:115.00px;font-size:11px;color:#2b2b2b;;letter-spacing:0.450px;margin-left:-0.71px">Default - Swift Source</span>
<span class="t" style="left:1059px;top:143.00px;font-size:10px;color:#262626;;letter-spacing:0.498px;margin-left:-0.61px">Location</span>
<span class="t" style="left:1112.4px;top:142.00px;font-size:11px;color:#2b2b2b;;letter-spacing:0.313px;margin-left:-0.73px">Relative to Group</span>
<span class="t" style="left:1106.3px;top:162.00px;font-size:11px;color:#2b2b2b;;letter-spacing:0.446px;margin-left:0.03px">ViewController.swift</span>
<span class="t" style="left:1058.6px;top:180.00px;font-size:10px;color:#262626;;letter-spacing:0.273px;margin-left:-0.61px">Full Path</span>
<span class="t" style="left:1106.3px;top:179.00px;font-size:11px;color:#3c3c3c;;letter-spacing:0.411px;margin-left:-0.10px">/Users/Beld/Desktop/</span>
<span class="t" style="left:1127px;top:194.00px;font-size:11px;color:#3c3c3c;;letter-spacing:0.660px;margin-left:-0.13px">/swift</span>
<span class="t" style="left:1165.2px;top:194.00px;font-size:11px;color:#3c3c3c;;letter-spacing:1.600px;margin-left:-0.81px">~/</span>
<span class="t" style="left:1206.5px;top:194.00px;font-size:11px;color:#3c3c3c;">/</span>
<span class="t" style="left:1240.4px;top:194.00px;font-size:11px;color:#3c3c3c;">/</span>
<span class="t" style="left:1106.3px;top:208.00px;font-size:11px;color:#3c3c3c;;letter-spacing:0.443px;margin-left:0.03px">ViewController.swift</span>
<span class="t" style="left:1025.1px;top:241.00px;font-size:10.5px;color:#1c1c1c;font-weight:700;letter-spacing:0.011px;margin-left:-0.23px">On Demand Resource Tags</span>
<span class="t" style="left:1032.6px;top:265.00px;font-size:11px;color:#b8b8b8;;letter-spacing:0.341px;margin-left:-0.29px">Only resources are taggable</span>
<span class="t" style="left:1025.1px;top:301.00px;font-size:10.5px;color:#1c1c1c;font-weight:700;letter-spacing:0.205px;margin-left:-0.02px">Target Membership</span>
<span class="t" style="left:1025.1px;top:380.00px;font-size:10.5px;color:#1c1c1c;font-weight:700;letter-spacing:0.177px;margin-left:-0.02px">Text Settings</span>
<span class="t" style="left:1032.6px;top:404.00px;font-size:10px;color:#262626;;letter-spacing:0.382px;margin-left:-0.29px">Text Encoding</span>
<span class="t" style="left:1112.4px;top:403.00px;font-size:11px;color:#2b2b2b;;letter-spacing:0.359px;margin-left:-0.73px">No Explicit Encoding</span>
<span class="t" style="left:1038.7px;top:426.00px;font-size:10px;color:#262626;;letter-spacing:0.329px;margin-left:-0.70px">Line Endings</span>
<span class="t" style="left:1112.4px;top:425.00px;font-size:11px;color:#a3a3a3;;letter-spacing:0.325px;margin-left:-0.66px">No Explicit Line Endings</span>
<span class="t" style="left:1039.3px;top:453.00px;font-size:10px;color:#262626;;letter-spacing:0.451px;margin-left:-0.86px">Indent Using</span>
<span class="t" style="left:1112.4px;top:452.00px;font-size:11px;color:#2b2b2b;;letter-spacing:0.374px;margin-left:-0.64px">Spaces</span>
<span class="t" style="left:1066.3px;top:476.00px;font-size:10px;color:#262626;;letter-spacing:0.560px;margin-left:0.01px">Widths</span>
<span class="t" style="left:1160.6px;top:475.00px;font-size:11px;color:#2b2b2b;">4</span>
<span class="t" style="left:1249.5px;top:475.00px;font-size:11px;color:#2b2b2b;">4</span>
<span class="t" style="left:1130.1px;top:490.00px;font-size:10px;color:#262626;;letter-spacing:0.199px;margin-left:-0.04px">Tab</span>
<span class="t" style="left:1211.3px;top:490.00px;font-size:10px;color:#262626;;letter-spacing:0.566px;margin-left:-0.85px">Indent</span>
<span class="t" style="left:1121.6px;top:508.00px;font-size:11px;color:#2b2b2b;;letter-spacing:0.258px;margin-left:0.03px">Wrap lines</span>
<span class="t" style="left:72.5px;top:73.00px;font-size:11.5px;color:#fff;;letter-spacing:0.191px;margin-left:-0.89px">Buildtime (2)</span>
<span class="t" style="left:155.6px;top:73.00px;font-size:11.5px;color:#43464b;;letter-spacing:0.147px;margin-left:-0.78px">Runtime</span>
<span class="t" style="left:27.3px;top:779.00px;font-size:11.5px;color:#9196a0;;letter-spacing:0.244px;margin-left:-0.70px">Filter</span>
<span class="t" style="left:282.5px;top:779.00px;font-size:11px;color:#2a2a2a;;letter-spacing:0.107px;margin-left:-0.10px">Auto</span>
<span class="t" style="left:490.75px;top:779.00px;font-size:11px;color:#b3b3b3;;letter-spacing:0.313px;margin-left:-0.90px">Filter</span>
<span class="t" style="left:657.3px;top:779.00px;font-size:11px;color:#2a2a2a;;letter-spacing:0.447px;margin-left:0.09px">All Output</span>
<span class="t" style="left:789px;top:779.00px;font-size:11px;color:#b3b3b3;;letter-spacing:0.524px;margin-left:-1.00px">Filter</span>
</div>
</body></html>
